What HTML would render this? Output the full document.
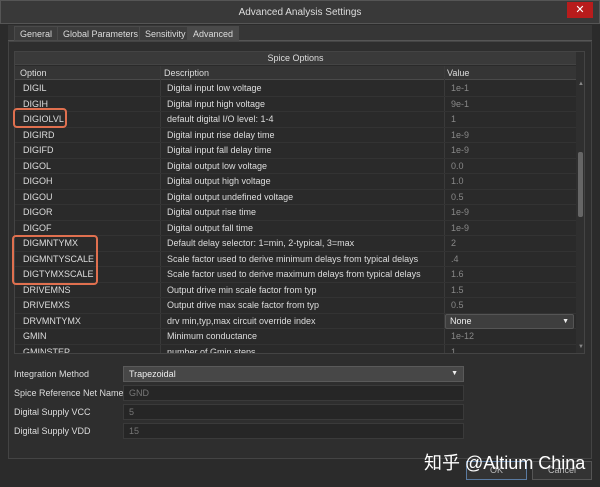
<!DOCTYPE html>
<html><head><style>
*{margin:0;padding:0;box-sizing:border-box}
body{width:600px;height:487px;background:#2b2b2b;font-family:"Liberation Sans","Noto Sans CJK SC",sans-serif;font-size:9px;color:#ddd;position:relative;overflow:hidden}
.abs{position:absolute}
.title{left:0;top:0;width:600px;height:24px;background:#393939;border:1px solid #555;text-align:center;line-height:24px;font-size:10px;color:#ddd}
.close{left:567px;top:2px;width:26px;height:16px;background:#b81c1c;color:#fff;text-align:center;line-height:16px;font-size:11px}
.tabs{left:8px;top:25px;width:584px;height:16px;background:#363636;border-bottom:1px solid #555}
.tab{position:absolute;top:1px;height:15px;line-height:15px;padding:0 5px;background:#3c3c3c;border:1px solid #4a4a4a;color:#ddd}
.panel{left:8px;top:41px;width:584px;height:418px;background:#2e2e2e;border:1px solid #444}
.tbl{left:14px;top:51px;width:571px;height:303px;background:#2a2a2a;border:1px solid #444;overflow:hidden}
.sh{left:0;top:0;width:561px;height:13px;background:#3a3a3a;text-align:center;line-height:13px;border-bottom:1px solid #444}
.ch{left:0;top:14px;width:561px;height:14px;background:#353535;line-height:14px;border-bottom:1px solid #4a4a4a}
.row{position:absolute;left:0;width:561px;height:15.5px;line-height:15.5px;border-bottom:1px solid #333}
.row span{position:absolute}
.c1{left:8px}.c2{left:152px}.c3{left:436px;color:#888}
.vl{position:absolute;top:14px;width:1px;height:300px;background:#3a3a3a}
.hl{border:2px solid #e0704f;border-radius:4px;position:absolute}
.lbl{position:absolute;left:14px;font-size:9px;color:#ddd}
.fld{position:absolute;left:123px;width:341px;height:16px;background:#262626;border:1px solid #3a3a3a;color:#777;line-height:14px;padding-left:5px}
</style></head><body>
<div class="abs title">Advanced Analysis Settings</div>
<div class="abs close">✕</div>
<div class="abs tabs">
<div class="tab" style="left:6px">General</div>
<div class="tab" style="left:49px">Global Parameters</div>
<div class="tab" style="left:131px">Sensitivity</div>
<div class="tab" style="left:179px;background:#4a4a4a">Advanced</div>
</div>
<div class="abs panel"></div>
<div class="abs tbl">
<div class="abs sh">Spice Options</div>
<div class="abs ch"><span class="abs" style="left:5px">Option</span><span class="abs" style="left:149px">Description</span><span class="abs" style="left:432px">Value</span></div>
<div class="vl" style="left:145px"></div><div class="vl" style="left:429px"></div>
<div class="abs" style="left:561px;top:0;width:10px;height:303px;background:#2f2f2f"></div>
<div class="abs" style="left:563px;top:100px;width:5px;height:65px;background:#666;border-radius:2px"></div>
<div class="abs" style="left:563px;top:29px;font-size:6px;color:#888">▲</div>
<div class="abs" style="left:563px;top:292px;font-size:6px;color:#888">▼</div>
<div style="position:absolute;left:0;top:29px">
<div class="row" style="top:0"><span class="c1">DIGIL</span><span class="c2">Digital input low voltage</span><span class="c3">1e-1</span></div>
<div class="row" style="top:15.5px"><span class="c1">DIGIH</span><span class="c2">Digital input high voltage</span><span class="c3">9e-1</span></div>
<div class="row" style="top:31px"><span class="c1">DIGIOLVL</span><span class="c2">default digital I/O level: 1-4</span><span class="c3">1</span></div>
<div class="row" style="top:46.5px"><span class="c1">DIGIRD</span><span class="c2">Digital input rise delay time</span><span class="c3">1e-9</span></div>
<div class="row" style="top:62px"><span class="c1">DIGIFD</span><span class="c2">Digital input fall delay time</span><span class="c3">1e-9</span></div>
<div class="row" style="top:77.5px"><span class="c1">DIGOL</span><span class="c2">Digital output low voltage</span><span class="c3">0.0</span></div>
<div class="row" style="top:93px"><span class="c1">DIGOH</span><span class="c2">Digital output high voltage</span><span class="c3">1.0</span></div>
<div class="row" style="top:108.5px"><span class="c1">DIGOU</span><span class="c2">Digital output undefined voltage</span><span class="c3">0.5</span></div>
<div class="row" style="top:124px"><span class="c1">DIGOR</span><span class="c2">Digital output rise time</span><span class="c3">1e-9</span></div>
<div class="row" style="top:139.5px"><span class="c1">DIGOF</span><span class="c2">Digital output fall time</span><span class="c3">1e-9</span></div>
<div class="row" style="top:155px"><span class="c1">DIGMNTYMX</span><span class="c2">Default delay selector: 1=min, 2-typical, 3=max</span><span class="c3">2</span></div>
<div class="row" style="top:170.5px"><span class="c1">DIGMNTYSCALE</span><span class="c2">Scale factor used to derive minimum delays from typical delays</span><span class="c3">.4</span></div>
<div class="row" style="top:186px"><span class="c1">DIGTYMXSCALE</span><span class="c2">Scale factor used to derive maximum delays from typical delays</span><span class="c3">1.6</span></div>
<div class="row" style="top:201.5px"><span class="c1">DRIVEMNS</span><span class="c2">Output drive min scale factor from typ</span><span class="c3">1.5</span></div>
<div class="row" style="top:217px"><span class="c1">DRIVEMXS</span><span class="c2">Output drive max scale factor from typ</span><span class="c3">0.5</span></div>
<div class="row" style="top:232.5px"><span class="c1">DRVMNTYMX</span><span class="c2">drv min,typ,max circuit override index</span></div>
<div class="row" style="top:248px"><span class="c1">GMIN</span><span class="c2">Minimum conductance</span><span class="c3">1e-12</span></div>
<div class="row" style="top:263.5px"><span class="c1">GMINSTEP</span><span class="c2">number of Gmin steps</span><span class="c3">1</span></div>
</div>
<div class="abs" style="left:430px;top:262px;width:129px;height:15px;background:#3e3e3e;border:1px solid #555;border-radius:2px;line-height:13px;padding-left:4px;color:#eee">None<span style="position:absolute;right:4px;font-size:7px">▼</span></div>
</div>
<div class="hl" style="left:13px;top:108px;width:54px;height:20px"></div>
<div class="hl" style="left:12px;top:235px;width:86px;height:50px"></div>
<div class="lbl" style="top:369px">Integration Method</div>
<div class="lbl" style="top:388px">Spice Reference Net Name</div>
<div class="lbl" style="top:407px">Digital Supply VCC</div>
<div class="lbl" style="top:426px">Digital Supply VDD</div>
<div class="fld" style="top:366px;background:#474747;border-color:#5a5a5a;color:#eee">Trapezoidal<span style="position:absolute;right:5px;font-size:7px">▼</span></div>
<div class="fld" style="top:385px">GND</div>
<div class="fld" style="top:404px">5</div>
<div class="fld" style="top:423px">15</div>
<div class="abs" style="left:466px;top:461px;width:61px;height:19px;border:1px solid #5a7aa0;background:#333;text-align:center;line-height:17px;color:#bbb">OK</div>
<div class="abs" style="left:532px;top:461px;width:60px;height:19px;border:1px solid #555;background:#333;text-align:center;line-height:17px;color:#bbb">Cancel</div>
<div class="abs" style="left:424px;top:449px;font-size:18px;color:#fff;white-space:nowrap">知乎 @Altium China</div>
</body></html>
